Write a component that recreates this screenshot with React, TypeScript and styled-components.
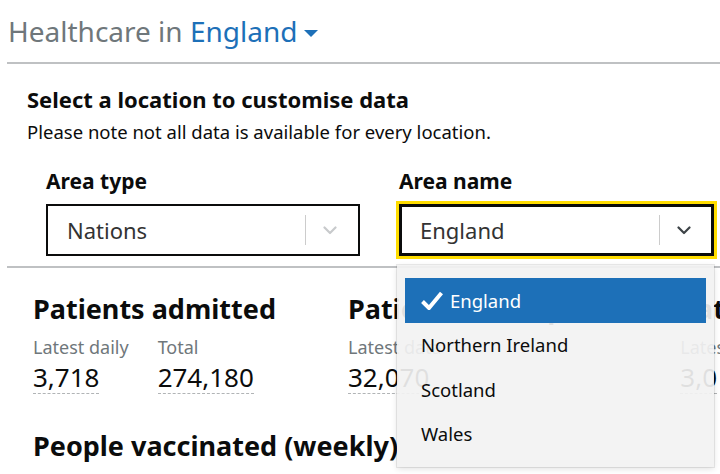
import styled, { createGlobalStyle } from 'styled-components';

const GlobalStyle = createGlobalStyle`
	html, body {
		margin: 0;
		padding: 0;
		background: #fff;
		font-family: 'Noto Sans', 'Liberation Sans', sans-serif;
		color: #0b0c0c;
		overflow: hidden;
	}
	* {
		box-sizing: border-box;
	}
`;

interface Stat {
	label: string;
	value: string;
}

interface Card {
	title: string;
	stats: Stat[];
}

const cards: Card[] = [
	{
		title: 'Patients admitted',
		stats: [
			{ label: 'Latest daily', value: '3,718' },
			{ label: 'Total', value: '274,180' },
		],
	},
	{
		title: 'Patients in hospital',
		stats: [{ label: 'Latest data', value: '32,070' }],
	},
	{
		title: 'Patients on ventilators',
		stats: [{ label: 'Latest data', value: '3,0' }],
	},
];

const areaNames = ['England', 'Northern Ireland', 'Scotland', 'Wales'];

const Chevron = ({ dark }: { dark?: boolean }) => (
	<svg width="14" height="9" viewBox="0 0 14 9" aria-hidden>
		<path
			d="M1.5 1.5 L7 7 L12.5 1.5"
			fill="none"
			stroke={dark ? '#3d4347' : '#c8cacc'}
			strokeWidth="2.2"
			strokeLinecap="round"
			strokeLinejoin="round"
		/>
	</svg>
);

const Tick = () => (
	<svg width="22" height="19" viewBox="0 0 22 19" aria-hidden>
		<path d="M1.5 10.5 L8 17 L20.5 2" fill="none" stroke="#fff" strokeWidth="4" strokeLinejoin="miter" />
	</svg>
);

export const App = () => {
	return (
		<Page>
			<GlobalStyle />
			<Header>
				<Title>
					Healthcare in <AreaLink>England</AreaLink>
					<Caret />
				</Title>
			</Header>

			<LocationPanel>
				<PanelHeading>Select a location to customise data</PanelHeading>
				<PanelNote>Please note not all data is available for every location.</PanelNote>
				<Fields>
					<Field>
						<FieldLabel>Area type</FieldLabel>
						<SelectBox>
							<SelectValue>Nations</SelectValue>
							<Indicator>
								<Chevron />
							</Indicator>
						</SelectBox>
					</Field>
					<Field $wide>
						<FieldLabel>Area name</FieldLabel>
						<SelectBox $focused>
							<SelectValue>England</SelectValue>
							<Indicator>
								<Chevron dark />
							</Indicator>
						</SelectBox>
						<Menu>
							{areaNames.map((name, i) => (
								<Option key={name} $selected={i === 0}>
									{i === 0 && <Tick />}
									{name}
								</Option>
							))}
						</Menu>
					</Field>
				</Fields>
			</LocationPanel>

			<Cards>
				{cards.map((card) => (
					<CardBlock key={card.title}>
						<CardTitle>{card.title}</CardTitle>
						<StatRow>
							{card.stats.map((stat) => (
								<StatItem key={stat.label}>
									<StatLabel>{stat.label}</StatLabel>
									<StatValue>{stat.value}</StatValue>
								</StatItem>
							))}
						</StatRow>
					</CardBlock>
				))}
			</Cards>
			<SectionTitle>People vaccinated (weekly)</SectionTitle>
		</Page>
	);
};
export default App;

const Page = styled.div`
	width: 720px;
	height: 474px;
	overflow: hidden;
`;

const Header = styled.header`
	margin-left: 7px;
	height: 64px;
	border-bottom: 2px solid #bfc1c3;
	padding: 10px 0 0 1px;
`;

const Title = styled.h1`
	margin: 0;
	font-size: 28px;
	font-weight: 400;
	line-height: 42px;
	color: #6f777b;
	display: flex;
	align-items: center;
	white-space: pre;
`;

const AreaLink = styled.span`
	color: #1d70b8;
`;

const Caret = styled.span`
	margin-left: 7px;
	margin-top: 4px;
	width: 0;
	height: 0;
	border-left: 7px solid transparent;
	border-right: 7px solid transparent;
	border-top: 7px solid #1d70b8;
`;

const LocationPanel = styled.section`
	margin-left: 7px;
	padding: 21px 0 10px 20px;
	border-bottom: 2px solid #bfc1c3;
`;

const PanelHeading = styled.h2`
	margin: 0;
	font-size: 22px;
	font-weight: 700;
	line-height: 28px;
	white-space: nowrap;
`;

const PanelNote = styled.p`
	margin: 6px 0 0;
	font-size: 18.5px;
	line-height: 26px;
	white-space: nowrap;
`;

const Fields = styled.div`
	display: flex;
	gap: 39px;
	margin-top: 22px;
	padding-left: 19px;
`;

const Field = styled.div<{ $wide?: boolean }>`
	position: relative;
	width: ${({ $wide }) => ($wide ? '315px' : '314px')};
`;

const FieldLabel = styled.div`
	font-size: 21px;
	font-weight: 700;
	line-height: 28px;
	margin-bottom: 9px;
`;

const SelectBox = styled.div<{ $focused?: boolean }>`
	display: flex;
	align-items: center;
	height: 52px;
	border: 2px solid #0b0c0c;
	background: #fff;
	${({ $focused }) =>
		$focused &&
		`
		outline: 3px solid #ffdd00;
		box-shadow: inset 0 0 0 1px #0b0c0c;
	`}
`;

const SelectValue = styled.span`
	flex: 1;
	padding-left: 19px;
	font-size: 22px;
	color: #333;
`;

const Indicator = styled.span`
	display: flex;
	align-items: center;
	justify-content: center;
	width: 53px;
	height: 30px;
	padding-right: 4px;
	border-left: 1px solid #cccccc;
`;

const Menu = styled.ul`
	position: absolute;
	top: 98px;
	left: -2px;
	right: 0;
	margin: 0;
	padding: 13px 8px 11px;
	list-style: none;
	background: rgba(242, 242, 242, 0.92);
	box-shadow: 0 0 0 1px rgba(0, 0, 0, 0.08), 0 2px 6px rgba(0, 0, 0, 0.12);
	z-index: 2;
`;

const Option = styled.li<{ $selected?: boolean }>`
	display: flex;
	align-items: center;
	gap: 7px;
	height: 44.5px;
	padding-left: 16px;
	font-size: 18.5px;
	color: ${({ $selected }) => ($selected ? '#fff' : '#0b0c0c')};
	background: ${({ $selected }) => ($selected ? '#1d70b8' : 'transparent')};
`;

const Cards = styled.div`
	display: flex;
	gap: 72px;
	padding: 24px 0 0 33px;
	white-space: nowrap;
`;

const CardBlock = styled.div`
	flex-shrink: 0;
`;

const CardTitle = styled.h3`
	margin: 0;
	font-size: 27px;
	font-weight: 700;
	line-height: 34px;
`;

const StatRow = styled.div`
	display: flex;
	gap: 29px;
	margin-top: 9px;
`;

const StatItem = styled.div`
	display: flex;
	flex-direction: column;
	align-items: flex-start;
`;

const StatLabel = styled.span`
	font-size: 18px;
	line-height: 24px;
	color: #6f777b;
`;

const StatValue = styled.span`
	margin-top: 3px;
	font-size: 26px;
	line-height: 30px;
	border-bottom: 1px dashed #b1b4b6;
	padding-bottom: 1px;
`;

const SectionTitle = styled.h3`
	margin: 35px 0 0 33px;
	font-size: 27px;
	font-weight: 700;
	line-height: 34px;
	white-space: nowrap;
`;
